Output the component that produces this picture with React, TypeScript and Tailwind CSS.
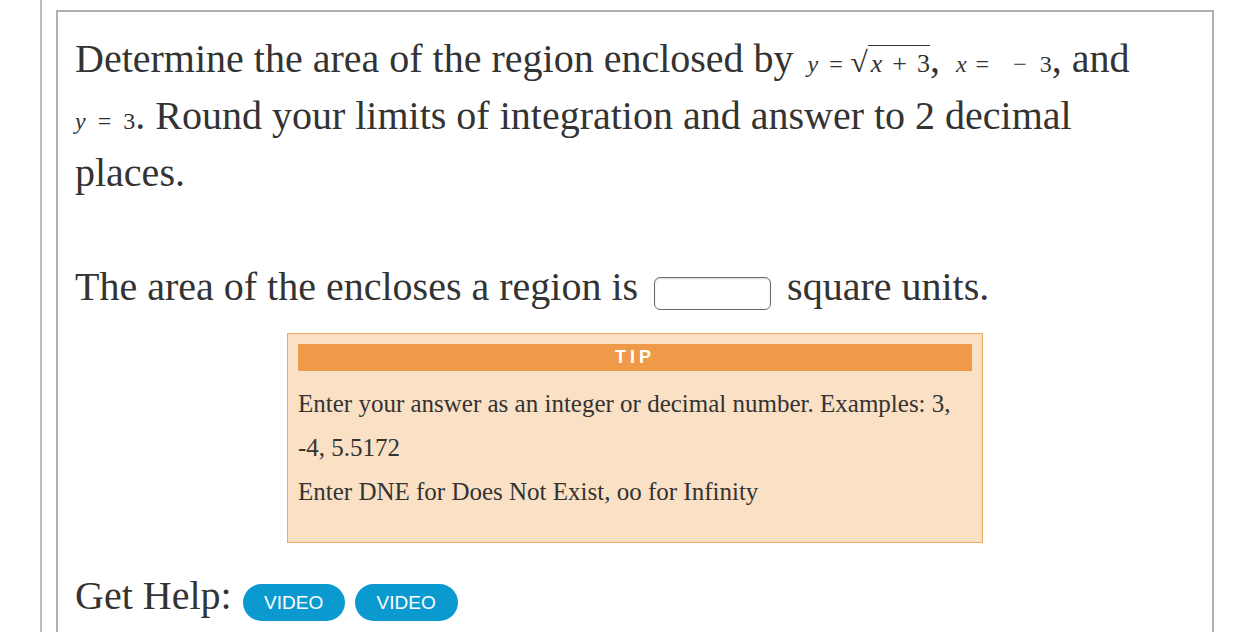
import React from 'react';

const serif = { fontFamily: '"Liberation Serif", "Times New Roman", serif' };

const M: React.FC<{ children: React.ReactNode; className?: string }> = ({ children, className }) => (
  <span className={`text-[24px] leading-none ${className ?? ''}`} style={serif}>
    {children}
  </span>
);

const V: React.FC<{ children: React.ReactNode }> = ({ children }) => <i className="italic">{children}</i>;

const App: React.FC = () => {
  return (
    <div className="h-[632px] w-[1242px] overflow-hidden bg-white pl-[40px] text-[#333]" style={serif}>
      <div className="h-full border-l-2 border-[#bdbdbd] pl-[14px] pt-[10px]">
        <div className="h-full w-[1158px] border-2 border-b-0 border-[#b0b0b0] px-[17px] pt-[18px]">
          {/* question */}
          <p className="text-[40px] leading-[57px]">
            Determine the area of the region enclosed by{' '}
            <M className="ml-[4px]">
              <V>y</V>
              <span className="ml-[11px] mr-[8px]">=</span>
              <span className="inline-block">
                <span className="mr-[1px] inline-block scale-x-110 text-[29px]">√</span>
                <span className="border-t border-[#333] pl-[3px] pt-[3px] text-[26px]">
                  <V>x</V>
                  <span className="mx-[10px]">+</span>3
                </span>
              </span>
            </M>
            ,{' '}
            <M className="ml-[6px]">
              <V>x</V>
              <span className="ml-[9px] mr-[24px]">=</span>
              <span className="mr-[13px]">−</span>3
            </M>
            , and
            <br />
            <M>
              <V>y</V>
              <span className="mx-[12px]">=</span>3
            </M>
            . Round your limits of integration and answer to 2 decimal
            <br />
            places.
          </p>

          <p className="mt-[57px] flex items-end text-[40px] leading-[57px]">
            <span>The area of the encloses a region is</span>
            <input
              type="text"
              className="mx-[16px] mb-[5px] h-[33px] w-[117px] rounded-[6px] border border-[#6b6b6b] bg-white shadow-[inset_0_1px_2px_rgba(0,0,0,0.15)] outline-none"
            />
            <span>square units.</span>
          </p>

          {/* tip */}
          <div className="mx-auto mt-[18px] w-[696px] border border-[#f2a862] bg-[#fae0c4] px-[10px] pb-[28px] pt-[10px]">
            <div
              className="flex h-[27px] items-center justify-center bg-[#ef9a48] text-[18px] font-bold tracking-[4px] text-white"
              style={{ fontFamily: '"Liberation Sans", Arial, sans-serif' }}
            >
              TIP
            </div>
            <div className="mt-[11px] text-[25px] leading-[44px]">
              <p>Enter your answer as an integer or decimal number. Examples: 3,</p>
              <p>-4, 5.5172</p>
              <p>Enter DNE for Does Not Exist, oo for Infinity</p>
            </div>
          </div>

          {/* help */}
          <div className="mt-[24px] flex items-baseline text-[40px] leading-[57px]">
            <span>Get Help:</span>
            <div
              className="ml-[11px] flex items-baseline gap-[10px]"
              style={{ fontFamily: '"Liberation Sans", Arial, sans-serif' }}
            >
              <button className="h-[37px] w-[102px] rounded-full bg-[#0b9ad0] text-[19px] leading-[37px] text-white">
                VIDEO
              </button>
              <button className="h-[37px] w-[103px] rounded-full bg-[#0b9ad0] text-[19px] leading-[37px] text-white">
                VIDEO
              </button>
            </div>
          </div>
        </div>
      </div>
    </div>
  );
};

export default App;
